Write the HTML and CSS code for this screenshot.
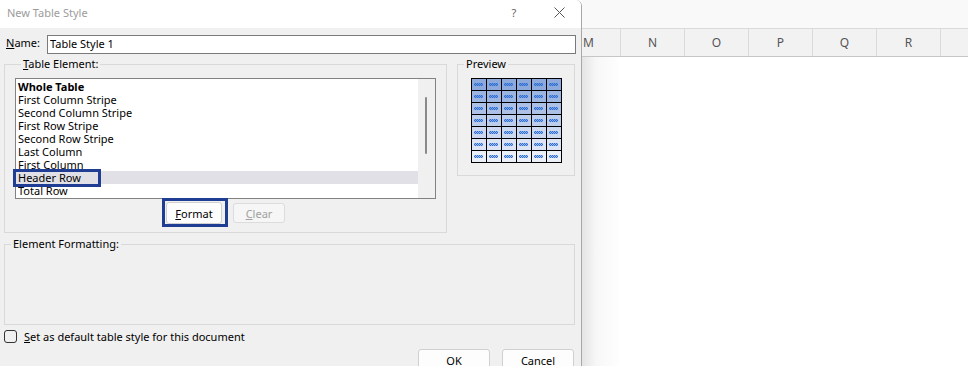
FILE: index.html
```html
<!DOCTYPE html>
<html>
<head>
<meta charset="utf-8">
<link rel="stylesheet" href="styles.css">
</head>
<body>
<div class="screen">
  <div class="dialog">
    <div class="titlebar">
      <span class="title">New Table Style</span>
      <span class="help">?</span>
      <svg class="close" width="11" height="11" viewBox="0 0 11 11"><path d="M0.5 0.5 L10.5 10.5 M10.5 0.5 L0.5 10.5" stroke="#555" stroke-width="1" fill="none"/></svg>
    </div>
    <div class="body">
      <div class="name-row">
        <label class="name-label"><u>N</u>ame:</label>
        <div class="input">Table Style 1</div>
      </div>
      <div class="top-groups">
        <fieldset class="group elements">
          <legend><u>T</u>able Element:</legend>
          <div class="listbox">
            <div class="items">
              <div class="item bold">Whole Table</div>
              <div class="item">First Column Stripe</div>
              <div class="item">Second Column Stripe</div>
              <div class="item">First Row Stripe</div>
              <div class="item">Second Row Stripe</div>
              <div class="item">Last Column</div>
              <div class="item">First Column</div>
              <div class="item selected">Header Row</div>
              <div class="item">Total Row</div>
            </div>
            <div class="scrollbar"><div class="thumb"></div></div>
            <div class="hl hl-row"></div>
          </div>
          <div class="btn-row">
            <div class="fmt-wrap">
              <button class="btn btn-format"><u>F</u>ormat</button>
              <div class="hl hl-btn"></div>
            </div>
            <button class="btn btn-clear" disabled><u>C</u>lear</button>
          </div>
        </fieldset>
        <fieldset class="group preview">
          <legend>Preview</legend>
          <div class="grid">
            <div class="c r1"><span class="sq"></span></div><div class="c r1"><span class="sq"></span></div><div class="c r1"><span class="sq"></span></div><div class="c r1"><span class="sq"></span></div><div class="c r1"><span class="sq"></span></div><div class="c r1"><span class="sq"></span></div>
            <div class="c r2"><span class="sq"></span></div><div class="c r2"><span class="sq"></span></div><div class="c r2"><span class="sq"></span></div><div class="c r2"><span class="sq"></span></div><div class="c r2"><span class="sq"></span></div><div class="c r2"><span class="sq"></span></div>
            <div class="c r3"><span class="sq"></span></div><div class="c r3"><span class="sq"></span></div><div class="c r3"><span class="sq"></span></div><div class="c r3"><span class="sq"></span></div><div class="c r3"><span class="sq"></span></div><div class="c r3"><span class="sq"></span></div>
            <div class="c r4"><span class="sq"></span></div><div class="c r4"><span class="sq"></span></div><div class="c r4"><span class="sq"></span></div><div class="c r4"><span class="sq"></span></div><div class="c r4"><span class="sq"></span></div><div class="c r4"><span class="sq"></span></div>
            <div class="c r5"><span class="sq"></span></div><div class="c r5"><span class="sq"></span></div><div class="c r5"><span class="sq"></span></div><div class="c r5"><span class="sq"></span></div><div class="c r5"><span class="sq"></span></div><div class="c r5"><span class="sq"></span></div>
            <div class="c r6"><span class="sq"></span></div><div class="c r6"><span class="sq"></span></div><div class="c r6"><span class="sq"></span></div><div class="c r6"><span class="sq"></span></div><div class="c r6"><span class="sq"></span></div><div class="c r6"><span class="sq"></span></div>
            <div class="c r7"><span class="sq"></span></div><div class="c r7"><span class="sq"></span></div><div class="c r7"><span class="sq"></span></div><div class="c r7"><span class="sq"></span></div><div class="c r7"><span class="sq"></span></div><div class="c r7"><span class="sq"></span></div>
          </div>
        </fieldset>
      </div>
      <fieldset class="group formatting">
        <legend>Element Formatting:</legend>
      </fieldset>
      <div class="check-row">
        <span class="checkbox"></span>
        <span><u>S</u>et as default table style for this document</span>
      </div>
      <div class="actions">
        <button class="btn btn-action">OK</button>
        <button class="btn btn-action">Cancel</button>
      </div>
    </div>
  </div>
  <div class="sheet">
    <div class="sheet-top"></div>
    <div class="col-head">
      <div class="col">M</div>
      <div class="col">N</div>
      <div class="col">O</div>
      <div class="col">P</div>
      <div class="col">Q</div>
      <div class="col">R</div>
      <div class="col"></div>
    </div>
    <div class="cells"></div>
  </div>
</div>
</body>
</html>
```

FILE: styles.css
```css
* { box-sizing: border-box; }
html, body { margin: 0; padding: 0; }
body {
  width: 968px;
  height: 366px;
  overflow: hidden;
  background: #fff;
  font-family: "Noto Sans", "DejaVu Sans", sans-serif;
  font-size: 11px;
  color: #000;
}
u { text-decoration: underline; text-underline-offset: 1px; }

.screen { display: flex; height: 366px; }

.dialog {
  width: 582px;
  flex: none;
  display: flex;
  flex-direction: column;
  background: #f0f0f0;
  border-right: 1px solid #a8a8a8;
  border-top-right-radius: 6px;
  overflow: hidden;
}

.titlebar {
  height: 28px;
  flex: none;
  background: #fff;
  display: flex;
  align-items: flex-start;
  padding: 5px 16px 0 7px;
  line-height: 15px;
  color: #9c9c9c;
}
.title { flex: 1; }
.help { width: 14px; text-align: center; color: #666; }
.close { margin-left: 33px; margin-top: 2px; }

.body {
  display: flex;
  flex-direction: column;
  padding: 7px 6px 0 4px;
}

.name-row { display: flex; align-items: flex-start; height: 19px; }
.name-label { width: 43px; padding-left: 2px; line-height: 15px; }
.input {
  flex: 1;
  height: 19px;
  margin-right: -1px;
  background: #fff;
  border: 1px solid #7a7a7a;
  padding-left: 2px;
  line-height: 15px;
}

.top-groups {
  display: flex;
  align-items: flex-start;
  gap: 10px;
  margin-top: 3px;
}

fieldset.group {
  margin: 0;
  padding: 0;
  min-width: 0;
  border: 1px solid #d9d9d9;
}
fieldset.group legend {
  margin-left: 6px;
  padding: 0 2px;
  line-height: 14px;
}

.elements {
  width: 443px;
  padding: 7px 10px 8px 10px !important;
}

.listbox {
  position: relative;
  height: 121px;
  display: flex;
  background: #fff;
  border: 1px solid #828282;
}
.items { flex: 1; padding-top: 1px; }
.item { height: 13px; line-height: 13px; padding-left: 2px; white-space: nowrap; }
.item.bold { font-weight: bold; }
.item.selected { background: #e0e0e6; }
.scrollbar {
  width: 17px;
  flex: none;
  background: #f0f0f0;
  padding: 18px 0 0 7px;
}
.thumb { width: 2px; height: 57px; background: #8a8a8a; border-radius: 1px; }

.hl {
  position: absolute;
  border: 3px solid #1f3e93;
}
.hl-row { left: -3px; top: 90px; width: 88px; height: 18px; }

.btn-row {
  display: flex;
  justify-content: center;
  align-items: center;
  gap: 11px;
  margin-top: 3px;
}
.fmt-wrap { position: relative; display: flex; }
.hl-btn { left: -4px; top: -4px; width: 66px; height: 29px; }

.btn {
  font: inherit;
  color: #000;
  margin: 0;
  padding: 0;
  background: #fdfdfd;
  border: 1px solid #d0d0d0;
  border-radius: 3px;
  line-height: 15px;
}
.btn-format { width: 56px; height: 22px; }
.btn-clear {
  width: 52px;
  height: 20px;
  color: #a0a0a0;
  background: #f6f6f6;
  border-color: #dcdcdc;
}

.preview {
  width: 118px;
  height: 119px;
  padding: 7px 0 0 0 !important;
}
.grid {
  width: 91px;
  margin: 0 auto;
  display: grid;
  grid-template-columns: repeat(6, 14px);
  grid-auto-rows: 11px;
  gap: 1px;
  background: #000;
  border: 1px solid #000;
}
.c { display: flex; align-items: center; justify-content: center; }
.sq {
  width: 9px;
  height: 3px;
  background: repeating-conic-gradient(#2c6fd6 0 25%, rgba(44,111,214,0.35) 0 50%) 0 0 / 2px 2px;
}
.r1 { background: #8eaadc; }
.r2 { background: #9db5e1; }
.r3 { background: #adc1e7; }
.r4 { background: #bdcdec; }
.r5 { background: #ccd8f0; }
.r6 { background: #dbe3f4; }
.r7 { background: #ebf0f9; }

.formatting {
  height: 88px;
  margin-top: 4px !important;
}

.check-row {
  display: flex;
  align-items: center;
  gap: 7px;
  height: 13px;
  margin-top: 5px;
  line-height: 15px;
}
.checkbox {
  width: 13px;
  height: 13px;
  border: 1px solid #333;
  border-radius: 3px;
  flex: none;
}

.actions {
  display: flex;
  justify-content: flex-end;
  gap: 12px;
  margin-top: 6px;
  margin-right: 1px;
}
.btn-action { width: 72px; height: 22px; }

.sheet {
  flex: 1;
  min-width: 0;
  display: flex;
  flex-direction: column;
  overflow: hidden;
}
.sheet-top {
  height: 29px;
  flex: none;
  background: #f9f9f9;
  border-bottom: 1px solid #dadada;
}
.col-head {
  height: 28px;
  flex: none;
  display: flex;
  margin-left: -25px;
  background: #f2f2f2;
  border-bottom: 1px solid #c6c6c6;
}
.col {
  width: 64px;
  flex: none;
  border-right: 1px solid #dadada;
  text-align: center;
  line-height: 27px;
  font-size: 12px;
  color: #555;
}
.cells {
  flex: 1;
  background: linear-gradient(90deg, #e4e4e4 0, #f7f7f7 14px, #fff 40px);
}
```
